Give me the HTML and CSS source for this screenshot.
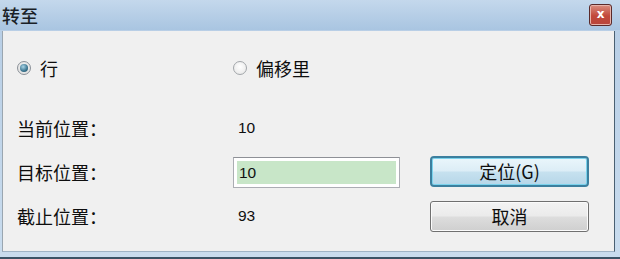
FILE: index.html
```html
<!DOCTYPE html>
<html lang="zh">
<head>
<meta charset="utf-8">
<title>转至</title>
<link rel="stylesheet" href="styles.css">
</head>
<body>
<div class="window">
  <div class="titlebar">
    <span class="title">转至</span>
    <span class="close">x</span>
  </div>
  <div class="client">
    <div class="radios">
      <label class="radio-item first"><span class="radio checked"></span><span class="rtext">行</span></label>
      <label class="radio-item"><span class="radio"></span><span class="rtext">偏移里</span></label>
    </div>
    <div class="grid">
      <div class="label">当前位置：</div>
      <div class="value">10</div>
      <div></div>
      <div></div>

      <div class="label">目标位置：</div>
      <div class="inputwrap"><div class="input">10</div></div>
      <div></div>
      <div class="btnwrap"><div class="btn default">定位(G)</div></div>

      <div class="label">截止位置：</div>
      <div class="value">93</div>
      <div></div>
      <div class="btnwrap"><div class="btn">取消</div></div>
    </div>
  </div>
</div>
</body>
</html>
```
FILE: styles.css
```css
html, body {
  margin: 0;
  padding: 0;
  background: #f0f0f0;
}
.window {
  width: 620px;
  height: 259px;
  box-sizing: border-box;
  display: flex;
  flex-direction: column;
  background: linear-gradient(#b6cde5, #c9dcee);
  border-bottom: 2px solid #3b5366;
  font-family: "Noto Sans CJK SC", "Microsoft YaHei", sans-serif;
  color: #0e0e0e;
}
.titlebar {
  height: 30px;
  flex: none;
  display: flex;
  align-items: center;
  justify-content: space-between;
  background: linear-gradient(#c4d8ec, #a9c5e1);
  padding: 0 8px 0 2px;
  box-sizing: border-box;
}
.title {
  font-size: 18px;
  line-height: 20px;
  font-weight: 500;
  color: #1a1f27;
}
.close {
  width: 21px;
  height: 20px;
  border: 1px solid #5a2a2a;
  border-radius: 3px;
  background: linear-gradient(#d98e80, #c2483a 55%, #b8463c);
  color: #fff;
  font-family: "DejaVu Sans", sans-serif;
  font-weight: bold;
  font-size: 12px;
  line-height: 18px;
  text-align: center;
  box-shadow: inset 0 0 0 1px #e7b3aa;
}
.client {
  flex: 1;
  background: #f0f0f0;
  margin: 1px 5px 5px 2px;
  border-left: 1px solid #9aa6b0;
  border-right: 1px solid #4a6072;
  border-bottom: 1px solid #9fb4c6;
  padding: 26px 0 0 14px;
  box-sizing: border-box;
}
.radios {
  display: flex;
  height: 22px;
  align-items: center;
}
.radio-item {
  display: flex;
  align-items: center;
  font-size: 18px;
}
.radio-item.first {
  width: 216px;
}
.radio {
  width: 14px;
  height: 14px;
  border-radius: 50%;
  box-sizing: border-box;
  border: 1px solid #a2a6aa;
  background: radial-gradient(circle at 50% 40%, #ffffff, #e4e4e4);
  margin-right: 9px;
  position: relative;
}
.radio.checked {
  border-color: #8b9198;
  background: radial-gradient(circle at 50% 40%, #f4f4f4, #dcdcdc);
}
.radio.checked::after {
  content: "";
  position: absolute;
  left: 2px;
  top: 2px;
  width: 8px;
  height: 8px;
  border-radius: 50%;
  background: radial-gradient(circle at 40% 35%, #a9d4e6, #3b7590 60%, #1f4a5e);
}
.rtext {
  line-height: 22px;
}
.grid {
  margin-top: 27px;
  display: grid;
  grid-template-columns: 216px 167px 30px 159px;
  grid-template-rows: 44px 44px 44px;
  align-items: center;
}
.label {
  font-size: 18px;
  line-height: 22px;
}
.value {
  font-family: "Liberation Sans", Arial, sans-serif;
  font-size: 15.5px;
  padding-left: 5px;
}
.inputwrap {
  height: 31px;
  box-sizing: border-box;
  border: 1px solid #abadb3;
  border-top-color: #8e9096;
  background: #fff;
  padding: 3px;
}
.input {
  height: 100%;
  background: #c8e6c8;
  font-family: "Liberation Sans", Arial, sans-serif;
  font-size: 15.5px;
  line-height: 23px;
  padding-left: 2px;
  color: #111;
}
.btnwrap {
  display: flex;
  align-self: center;
}
.btn {
  width: 159px;
  height: 31px;
  box-sizing: border-box;
  border: 1px solid #707070;
  border-radius: 3px;
  background: linear-gradient(#f3f3f3 0%, #ebebeb 48%, #dddddd 52%, #cfcfcf 100%);
  box-shadow: inset 0 0 0 1px #fbfbfb;
  font-size: 18px;
  line-height: 28px;
  text-align: center;
}
.btn.default {
  border: 2px solid #3c7f9e;
  border-radius: 4px;
  background: linear-gradient(#eaf6fb 0%, #dcedf6 48%, #c6e1ef 52%, #b6d6e8 100%);
  box-shadow: inset 0 0 0 1px #7ad2ec;
  line-height: 26px;
}
.grid > :nth-child(8) { margin-top: -2px; }
.grid > :nth-child(12) { margin-top: 1px; }
```
